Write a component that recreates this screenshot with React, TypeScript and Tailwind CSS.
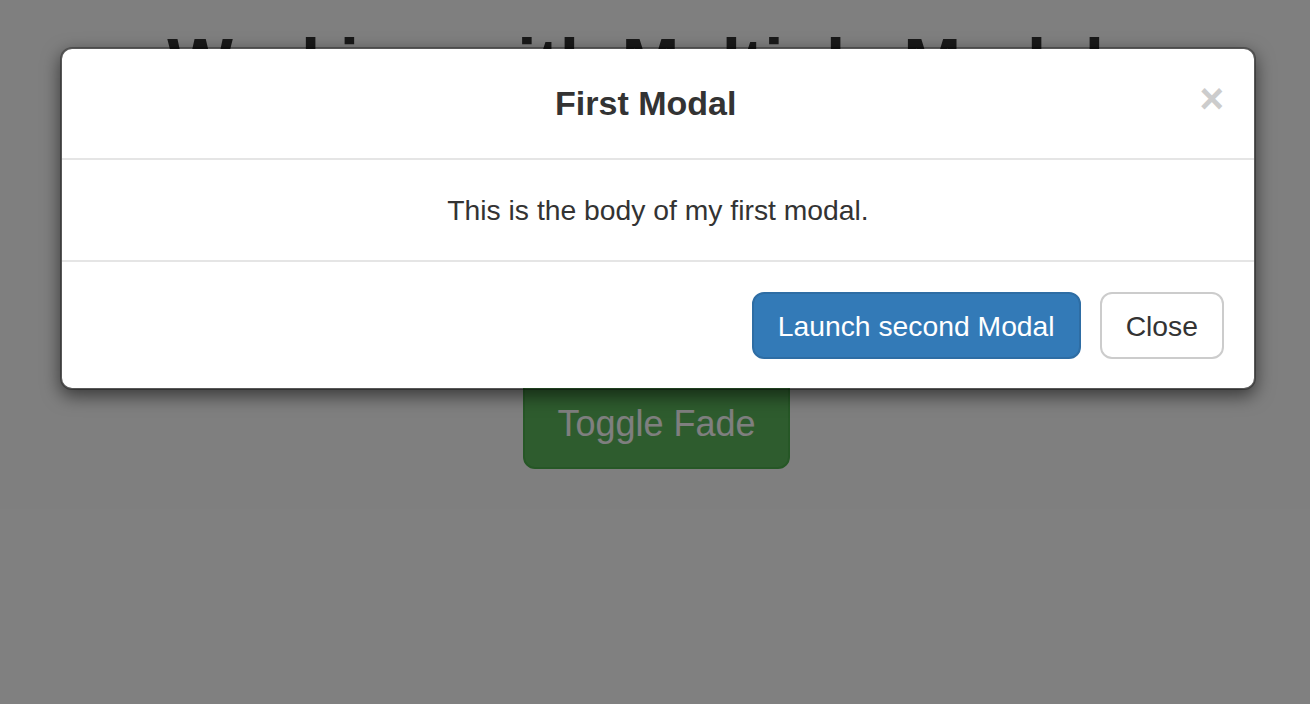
import React from "react";

export default function App() {
  return (
    <div className="relative h-[704px] w-[1310px] overflow-hidden bg-white font-['Liberation_Sans',Arial,sans-serif]">
      {/* underlying page */}
      <div className="flex flex-col items-center pt-[26px]">
        <h1 className="text-[69.5px] font-bold leading-[77px] text-[#333333] whitespace-nowrap">
          Working with Multiple Modals
        </h1>
        <button className="mt-[274px] ml-[3px] flex h-[92px] items-center rounded-[12px] border-2 border-[#4cae4c] bg-[#5cb85c] px-[32px] pt-[2px] text-[36px] leading-[48px] text-white">
          Toggle Fade
        </button>
      </div>

      {/* backdrop */}
      <div className="absolute inset-0 bg-black/50" />

      {/* modal */}
      <div className="absolute left-[60px] top-[47px] w-[1196px] rounded-[12px] border-2 border-black/30 bg-white bg-clip-padding shadow-[0_6px_18px_rgba(0,0,0,0.55)]">
        <div className="flex items-start border-b-2 border-[#e5e5e5] px-[30px] pt-[30px] pb-[30px]">
          <div className="flex-1 text-center text-[34px] font-bold leading-[49px] text-[#333333]">
            First Modal
          </div>
          <div className="mt-[-1.5px] w-[24.5px] text-[42px] font-bold leading-[42px] text-[#cccccc]">
            ×
          </div>
        </div>
        <div className="border-b-2 border-[#e5e5e5] px-[30px] py-[30px] text-center text-[28.3px] leading-[40px] text-[#333333]">
          This is the body of my first modal.
        </div>
        <div className="flex justify-end gap-[19px] px-[30px] pt-[30px] pb-[29px]">
          <button className="flex h-[67px] items-center rounded-[12px] border-2 border-[#2e6da4] bg-[#337ab7] px-[24px] text-[28.3px] leading-[40px] text-white">
            Launch second Modal
          </button>
          <button className="flex h-[67px] items-center rounded-[12px] border-2 border-[#cccccc] bg-white px-[24px] text-[28.3px] leading-[40px] text-[#333333]">
            Close
          </button>
        </div>
      </div>
    </div>
  );
}
